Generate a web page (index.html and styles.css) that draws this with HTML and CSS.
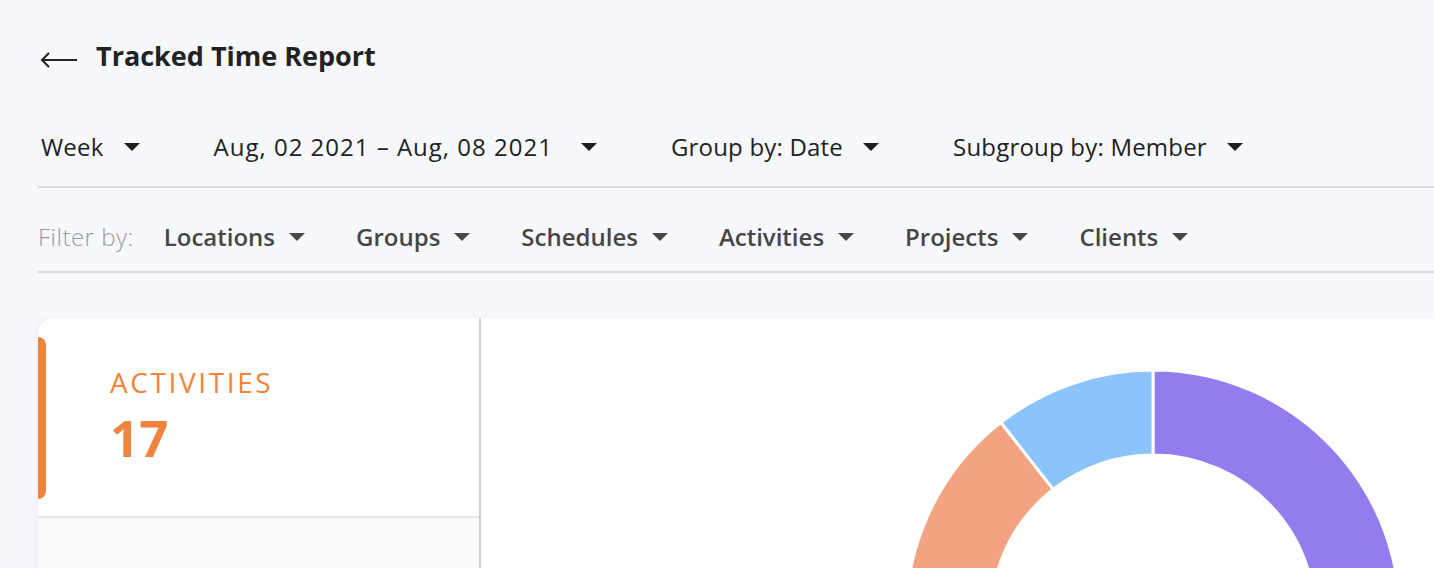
FILE: index.html
```html
<!DOCTYPE html>
<html lang="en">
<head>
    <meta charset="UTF-8">
    <title>Tracked Time Report</title>
    <link rel="stylesheet" href="styles.css">
</head>
<body>
    <div class="page">
        <!-- Заголовок -->
        <div class="header">
            <svg class="back-arrow" width="38" height="16" viewBox="0 0 38 16">
                <path d="M37 8H2M9 1L2 8l7 7" fill="none" stroke="#222" stroke-width="2"/>
            </svg>
            <h1 class="title">Tracked Time Report</h1>
        </div>

        <!-- Период и группировка -->
        <div class="toolbar">
            <div class="dropdown">Week <span class="caret"></span></div>
            <div class="dropdown range">Aug, 02 2021 – Aug, 08 2021 <span class="caret"></span></div>
            <div class="dropdown">Group by: Date <span class="caret"></span></div>
            <div class="dropdown">Subgroup by: Member <span class="caret"></span></div>
        </div>

        <!-- Фильтры -->
        <div class="filters">
            <span class="filter-label">Filter by:</span>
            <div class="filter">Locations <span class="caret small"></span></div>
            <div class="filter">Groups <span class="caret small"></span></div>
            <div class="filter">Schedules <span class="caret small"></span></div>
            <div class="filter">Activities <span class="caret small"></span></div>
            <div class="filter">Projects <span class="caret small"></span></div>
            <div class="filter">Clients <span class="caret small"></span></div>
        </div>

        <div class="card">
            <div class="side">
                <div class="stat active">
                    <div class="stat-name">ACTIVITIES</div>
                    <div class="stat-value">17</div>
                </div>
                <div class="stat-rest"></div>
            </div>
            <div class="chart">
                <svg class="donut" width="500" height="500" viewBox="0 0 500 500">
                    <g stroke="#fff" stroke-width="3">
                        <path fill="#937cee" d="M250,3 A247,247 0 1 1 165.5,482.1 L194.6,402.2 A162,162 0 1 0 250,88 Z"/>
                        <path fill="#f3a382" d="M165.5,482.1 A247,247 0 0 1 97.9,55.4 L150.3,122.3 A162,162 0 0 0 194.6,402.2 Z"/>
                        <path fill="#8ac4fb" d="M97.9,55.4 A247,247 0 0 1 250,3 L250,88 A162,162 0 0 0 150.3,122.3 Z"/>
                    </g>
                </svg>
            </div>
        </div>
    </div>
</body>
</html>
```

FILE: styles.css
```css
body {
    margin: 0;
    background: #f7f8fc;
    font-family: "Open Sans", "Lato", sans-serif;
    color: #222;
    overflow: hidden;
}

.page {
    padding-left: 38px;
}

.header {
    display: flex;
    align-items: center;
    gap: 18px;
    padding-top: 40px;
}

.back-arrow {
    margin-left: 2px;
    margin-top: 8px;
}

.title {
    margin: 0;
    font-size: 27px;
    line-height: 32px;
    font-weight: 700;
}

.toolbar {
    display: flex;
    align-items: center;
    gap: 74px;
    margin-top: 60px;
    padding: 0 0 24px 3px;
    border-bottom: 2px solid #dcdcdf;
}

.dropdown {
    display: flex;
    align-items: center;
    gap: 20px;
    font-size: 24px;
    line-height: 30px;
    letter-spacing: 0.2px;
}

.dropdown.range {
    gap: 28px;
    letter-spacing: 1px;
}

.caret {
    width: 0;
    height: 0;
    border-left: 8.5px solid transparent;
    border-right: 8.5px solid transparent;
    border-top: 8px solid #1e1e1e;
}

.caret.small {
    border-top-color: #484848;
}

.filters {
    display: flex;
    align-items: center;
    gap: 51px;
    padding: 34px 0 19px;
    border-bottom: 2px solid #dcdcdf;
}

.filter-label {
    font-size: 24px;
    line-height: 30px;
    font-weight: 300;
    letter-spacing: 0.5px;
    color: #9a9a9e;
    margin-right: -21px;
}

.filter {
    display: flex;
    align-items: center;
    gap: 14px;
    font-size: 24px;
    line-height: 30px;
    font-weight: 600;
    color: #464646;
}

.card {
    display: flex;
    margin-top: 45px;
    background: #fff;
    border-top-left-radius: 16px;
    box-shadow: -2px 0 6px rgba(0, 0, 0, 0.04);
    height: 260px;
}

.side {
    width: 441px;
    flex-shrink: 0;
    border-right: 2px solid #cfcfd2;
    display: flex;
    flex-direction: column;
}

.stat {
    position: relative;
    height: 200px;
    padding: 48px 0 0 72px;
    box-sizing: border-box;
    border-bottom: 2px solid #e6e6e8;
}

.stat.active::before {
    content: "";
    position: absolute;
    left: 0;
    top: 19px;
    width: 8px;
    height: 162px;
    background: #f0843c;
    border-radius: 0 8px 8px 0;
}

.stat-name {
    font-size: 28px;
    line-height: 32px;
    font-weight: 500;
    letter-spacing: 2.6px;
    color: #f0843c;
}

.stat-value {
    margin-top: 8px;
    font-size: 51px;
    line-height: 62px;
    font-weight: 700;
    color: #f0843c;
}

.stat-rest {
    flex: 1;
    background: #fafafa;
}

.chart {
    flex: 1;
    overflow: hidden;
}

.donut {
    display: block;
    margin: 49px 0 0 422px;
}
```
